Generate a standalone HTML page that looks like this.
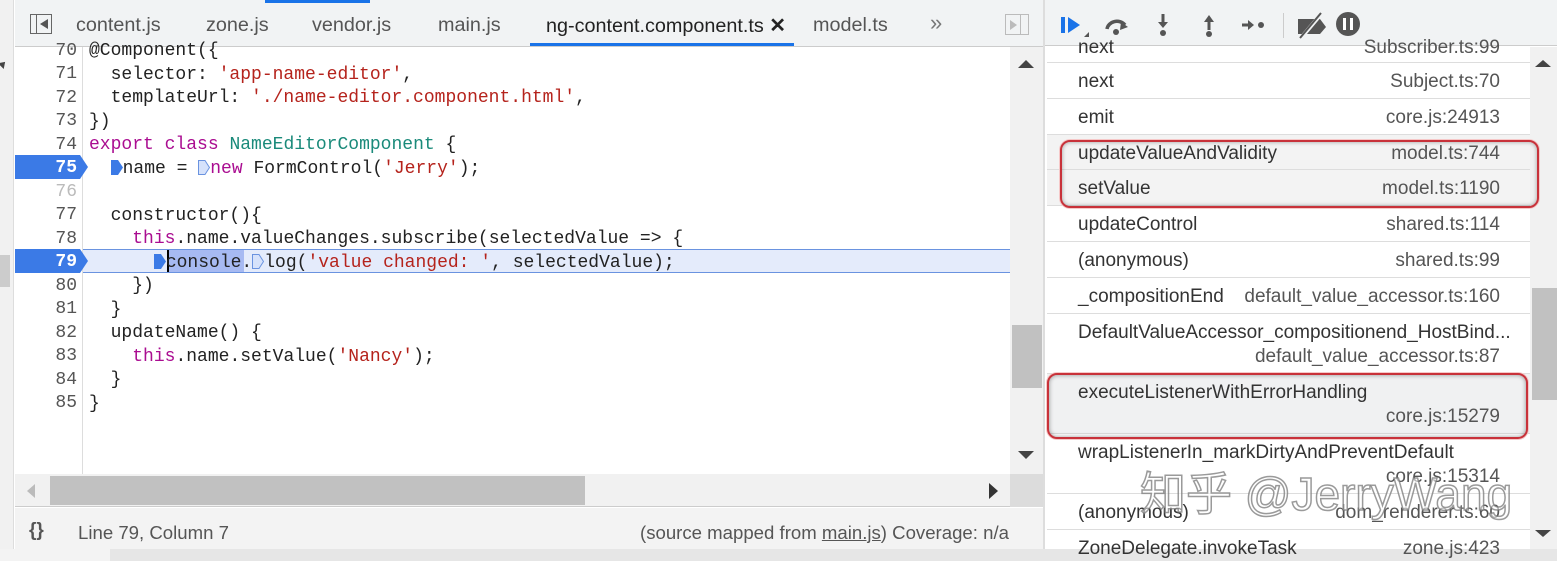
<!DOCTYPE html>
<html><head><meta charset="utf-8"><style>
*{margin:0;padding:0;box-sizing:border-box}
body{width:1557px;height:561px;overflow:hidden;background:#fff;position:relative;font-family:"Liberation Sans",sans-serif;color:#333}
.a{position:absolute}
.code{font-family:"Liberation Mono",monospace;font-size:18px;white-space:pre;color:#222;line-height:23.5px}
.ln{position:absolute;left:15px;width:62px;text-align:right;font-family:"Liberation Mono",monospace;font-size:18px;color:#555;line-height:23.5px}
.k{color:#aa0d91}.s{color:#b5231c}.t{color:#1a8a7a}
.row{position:absolute;left:1047px;width:483px;border-bottom:1px solid #ddd;font-size:19px;color:#333}
.row .f{position:absolute;left:31px}
.row .l{position:absolute;right:30px;color:#555}
.tab{position:absolute;top:14px;font-size:19.8px;color:#555}
.bp{display:inline-block;width:12px;height:15px;vertical-align:-2px}
</style></head><body>
<div class="a" style="left:0;top:0;width:14px;height:549px;background:#f1f1f1;border-right:1px solid #ddd"></div>
<div class="a" style="left:0;top:255px;width:10px;height:32px;background:#ccc"></div>
<div class="a" style="left:0;top:60px;width:0;height:0;border-left:6px solid #444;border-top:4px solid transparent;border-bottom:4px solid transparent;transform:rotate(-45deg)"></div>
<div class="a" style="left:15px;top:0;width:1028px;height:47px;background:#f1f3f4;border-bottom:1px solid #ccc"></div>
<div class="a" style="left:265px;top:0;width:105px;height:3px;background:#1a73e8"></div>
<div class="a" style="left:30px;top:14px;width:22px;height:20px;border:1.5px solid #666"></div>
<div class="a" style="left:36px;top:14px;width:1px;height:20px;background:#666"></div>
<div class="a" style="left:40px;top:19px;width:0;height:0;border-right:8px solid #555;border-top:5px solid transparent;border-bottom:5px solid transparent"></div>
<div class="tab" style="left:76px">content.js</div>
<div class="tab" style="left:206px">zone.js</div>
<div class="tab" style="left:312px">vendor.js</div>
<div class="tab" style="left:438px">main.js</div>
<div class="tab" style="left:546px;color:#222">ng-content.component.ts <span style="font-weight:bold;color:#222">✕</span></div>
<div class="a" style="left:530px;top:43px;width:264px;height:3px;background:#1a73e8"></div>
<div class="tab" style="left:813px">model.ts</div>
<div class="tab" style="left:930px;font-size:22px;top:10px;color:#777">»</div>
<div class="a" style="left:1005px;top:14px;width:24px;height:21px;border:1.5px solid #bbb"></div>
<div class="a" style="left:1020px;top:14px;width:1px;height:21px;background:#bbb"></div>
<div class="a" style="left:1010px;top:20px;width:0;height:0;border-left:7px solid #bbb;border-top:5px solid transparent;border-bottom:5px solid transparent"></div>
<div class="a" style="left:82px;top:47px;width:1px;height:427px;background:#ddd"></div>
<div class="a" style="left:83px;top:249px;width:927px;height:24px;background:#e4ebfb;border-top:1px solid #6a93e0;border-bottom:1px solid #6a93e0"></div>
<svg class="a" style="left:15px;top:155px" width="75" height="24"><path d="M0 0H65L73 12L65 24H0Z" fill="#3b7ae6"/></svg>
<svg class="a" style="left:15px;top:249px" width="75" height="24"><path d="M0 0H65L73 12L65 24H0Z" fill="#3b7ae6"/></svg>
<div class="a" style="left:168px;top:250px;width:76px;height:22px;background:#a7baf2"></div>
<div class="a" style="left:167px;top:250px;width:1.5px;height:22px;background:#000"></div>
<div class="ln" style="top:40px">70</div>
<div class="ln" style="top:63px">71</div>
<div class="ln" style="top:87px">72</div>
<div class="ln" style="top:110px">73</div>
<div class="ln" style="top:134px">74</div>
<div class="ln" style="top:157px;color:#fff;font-weight:bold">75</div>
<div class="ln" style="top:181px;color:#bbb">76</div>
<div class="ln" style="top:204px">77</div>
<div class="ln" style="top:228px">78</div>
<div class="ln" style="top:251px;color:#fff;font-weight:bold">79</div>
<div class="ln" style="top:275px">80</div>
<div class="ln" style="top:298px">81</div>
<div class="ln" style="top:322px">82</div>
<div class="ln" style="top:345px">83</div>
<div class="ln" style="top:369px">84</div>
<div class="ln" style="top:392px">85</div>
<div class="a code" style="left:89px;top:40px">@Component({
  selector: <span class="s">'app-name-editor'</span>,
  templateUrl: <span class="s">'./name-editor.component.html'</span>,
})
<span class="k">export</span> <span class="k">class</span> <span class="t">NameEditorComponent</span> {
  <svg class="bp" viewBox="0 0 12 15"><path d="M0 0H7L12 7.5L7 15H0Z" fill="#3b7ae6"/></svg>name = <svg class="bp" viewBox="0 0 12 15"><path d="M0.5 0.5H7L11.5 7.5L7 14.5H0.5Z" fill="#d6e2fb" stroke="#6a93e0"/></svg><span class="k">new</span> FormControl(<span class="s">'Jerry'</span>);

  constructor(){
    <span class="k">this</span>.name.valueChanges.subscribe(selectedValue =&gt; {
      <svg class="bp" viewBox="0 0 12 15"><path d="M0 0H7L12 7.5L7 15H0Z" fill="#3b7ae6"/></svg>console.<svg class="bp" viewBox="0 0 12 15"><path d="M0.5 0.5H7L11.5 7.5L7 14.5H0.5Z" fill="#d6e2fb" stroke="#6a93e0"/></svg>log(<span class="s">'value changed: '</span>, selectedValue);
    })
  }
  updateName() {
    <span class="k">this</span>.name.setValue(<span class="s">'Nancy'</span>);
  }
}</div>
<div class="a" style="left:1010px;top:47px;width:33px;height:427px;background:#f1f1f1"></div>
<div class="a" style="left:1012px;top:325px;width:30px;height:63px;background:#c1c1c1"></div>
<div class="a" style="left:1018px;top:60px;border-bottom:8px solid #444;border-left:8px solid transparent;border-right:8px solid transparent"></div>
<div class="a" style="left:1018px;top:451px;border-top:8px solid #444;border-left:8px solid transparent;border-right:8px solid transparent"></div>
<div class="a" style="left:15px;top:474px;width:1028px;height:33px;background:#f1f1f1;border-bottom:1px solid #ccc"></div>
<div class="a" style="left:50px;top:476px;width:535px;height:29px;background:#c1c1c1"></div>
<div class="a" style="left:1010px;top:474px;width:33px;height:33px;background:#dcdcdc"></div>
<div class="a" style="left:27px;top:484px;border-right:8px solid #bbb;border-top:7px solid transparent;border-bottom:7px solid transparent"></div>
<div class="a" style="left:989px;top:483px;border-left:9px solid #333;border-top:8px solid transparent;border-bottom:8px solid transparent"></div>
<div class="a" style="left:15px;top:508px;width:1028px;height:41px;background:#f3f3f3"></div>
<div class="a" style="left:29px;top:520px;font-size:19px;font-weight:bold;color:#555">{}</div>
<div class="a" style="left:78px;top:522px;font-size:18.6px;color:#555">Line 79, Column 7</div>
<div class="a" style="left:640px;top:522px;font-size:18.6px;color:#555">(source mapped from <u>main.js</u>) Coverage: n/a</div>
<div class="a" style="left:0;top:549px;width:1557px;height:12px;background:#e6e6e6"></div>
<div class="a" style="left:0;top:549px;width:110px;height:12px;background:#f3f3f3"></div>
<div class="a" style="left:1043px;top:0;width:2px;height:549px;background:#ddd"></div>
<div class="a" style="left:1045px;top:0;width:512px;height:46px;background:#f1f3f4;border-bottom:1px solid #ccc"></div>
<svg class="a" style="left:1058px;top:10px" width="320" height="30">
<rect x="3" y="7" width="4" height="16" fill="#1a73e8"/><path d="M10 7L22 15L10 23Z" fill="#1a73e8"/><path d="M26 27L31 22V27Z" fill="#555"/>
<path d="M49 19A10 9 0 0 1 67 15" stroke="#555" stroke-width="3.5" fill="none"/><path d="M63 12L70 17L62 20Z" fill="#555"/><circle cx="58" cy="22" r="3" fill="#555"/>
<path d="M105 4V14" stroke="#555" stroke-width="3"/><path d="M100 12L105 18L110 12Z" fill="#555"/><circle cx="105" cy="23" r="3" fill="#555"/>
<path d="M151 10V20" stroke="#555" stroke-width="3"/><path d="M146 12L151 5L156 12Z" fill="#555"/><circle cx="151" cy="24" r="3" fill="#555"/>
<path d="M184 15H192" stroke="#555" stroke-width="3"/><path d="M190 10L196 15L190 20Z" fill="#555"/><circle cx="203" cy="15" r="3" fill="#555"/>
<rect x="225" y="3" width="1" height="25" fill="#ccc"/>
<path d="M240 9H262L268 17L262 24H240Z" fill="#555"/><path d="M243 28L264 3" stroke="#f1f3f4" stroke-width="4"/><path d="M242 28L263 3" stroke="#555" stroke-width="2"/>
<circle cx="290" cy="14" r="12" fill="#555"/><rect x="285" y="8" width="3" height="12" fill="#fff"/><rect x="292" y="8" width="3" height="12" fill="#fff"/>
</svg>
<div class="row" style="top:30px;height:33px"><span class="f" style="top:7px">next</span><span class="l" style="top:7px">Subscriber.ts:99</span></div>
<div class="row" style="top:63px;height:36px"><span class="f" style="top:8px">next</span><span class="l" style="top:8px">Subject.ts:70</span></div>
<div class="row" style="top:99px;height:36px"><span class="f" style="top:8px">emit</span><span class="l" style="top:8px">core.js:24913</span></div>
<div class="row" style="top:135px;height:35px;background:#f3f3f3"><span class="f" style="top:8px">updateValueAndValidity</span><span class="l" style="top:8px">model.ts:744</span></div>
<div class="row" style="top:170px;height:36px;background:#f3f3f3"><span class="f" style="top:8px">setValue</span><span class="l" style="top:8px">model.ts:1190</span></div>
<div class="row" style="top:206px;height:36px"><span class="f" style="top:8px">updateControl</span><span class="l" style="top:8px">shared.ts:114</span></div>
<div class="row" style="top:242px;height:36px"><span class="f" style="top:8px">(anonymous)</span><span class="l" style="top:8px">shared.ts:99</span></div>
<div class="row" style="top:278px;height:36px"><span class="f" style="top:8px">_compositionEnd</span><span class="l" style="top:8px">default_value_accessor.ts:160</span></div>
<div class="row" style="top:314px;height:60px"><span class="f" style="top:8px">DefaultValueAccessor_compositionend_HostBind...</span><span class="l" style="top:32px">default_value_accessor.ts:87</span></div>
<div class="row" style="top:374px;height:60px;background:#f0f1f2"><span class="f" style="top:8px">executeListenerWithErrorHandling</span><span class="l" style="top:32px">core.js:15279</span></div>
<div class="row" style="top:434px;height:60px"><span class="f" style="top:8px">wrapListenerIn_markDirtyAndPreventDefault</span><span class="l" style="top:32px">core.js:15314</span></div>
<div class="row" style="top:494px;height:36px"><span class="f" style="top:8px">(anonymous)</span><span class="l" style="top:8px">dom_renderer.ts:60</span></div>
<div class="row" style="top:530px;height:36px;border:none"><span class="f" style="top:8px">ZoneDelegate.invokeTask</span><span class="l" style="top:8px">zone.js:423</span></div>
<div class="a" style="left:1530px;top:47px;width:27px;height:502px;background:#f1f1f1"></div>
<div class="a" style="left:1532px;top:288px;width:25px;height:112px;background:#c1c1c1"></div>
<div class="a" style="left:1535px;top:60px;border-bottom:7px solid #444;border-left:8px solid transparent;border-right:8px solid transparent"></div>
<div class="a" style="left:1535px;top:530px;border-top:7px solid #444;border-left:8px solid transparent;border-right:8px solid transparent"></div>
<div class="a" style="left:1060px;top:140px;width:479px;height:68px;border:2px solid #c8323a;border-radius:10px;box-shadow:0 0 0 1px #f6c8c8,inset 0 0 4px rgba(0,0,0,.35)"></div>
<div class="a" style="left:1047px;top:373px;width:481px;height:66px;border:2px solid #c8323a;border-radius:10px;box-shadow:0 0 0 1px #f6c8c8,inset 0 0 5px rgba(0,0,0,.4)"></div>
<div class="a" style="left:1140px;top:458px;font-size:46px;color:rgba(255,255,255,.55);-webkit-text-stroke:1.5px rgba(120,120,120,.75);font-family:'Liberation Sans','Noto Sans CJK SC',sans-serif;white-space:nowrap">知乎 @JerryWang</div>
</body></html>
